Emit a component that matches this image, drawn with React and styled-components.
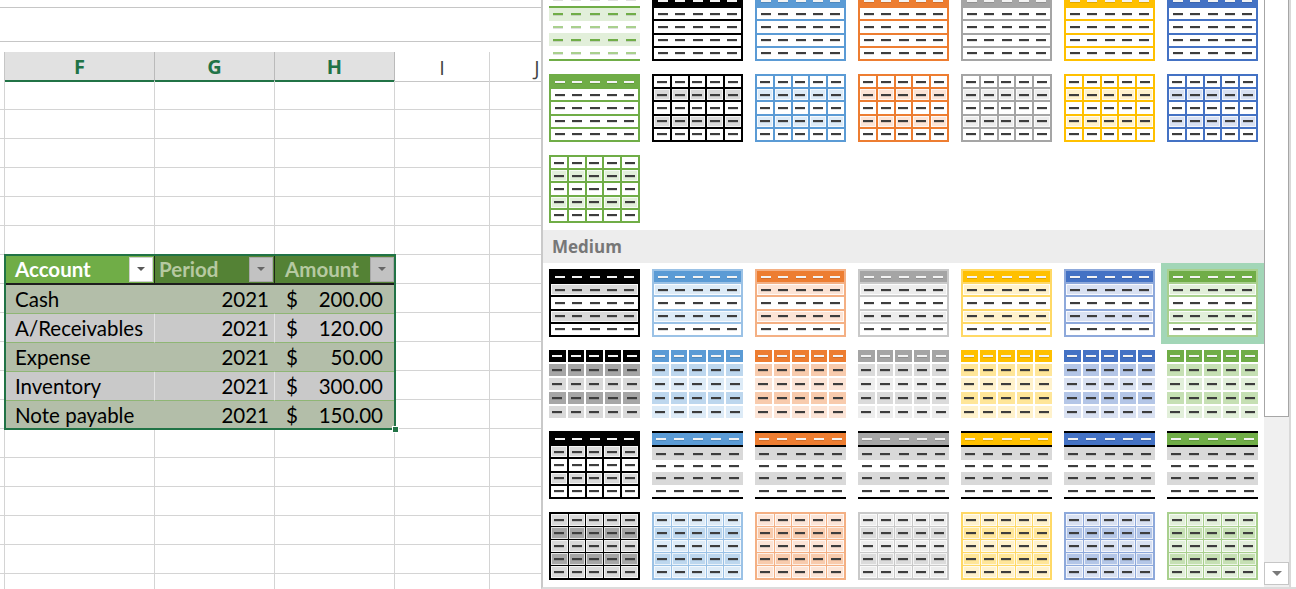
import React from "react"
import styled, { createGlobalStyle } from "styled-components"

const GlobalStyle = createGlobalStyle`
  html, body {
    margin: 0;
    padding: 0;
    background: #ffffff;
    overflow: hidden;
  }
  body {
    font-family: "Lato", "Liberation Sans", sans-serif;
  }
`

const GRID_LINE = "#d4d4d4"
const EXCEL_GREEN = "#217346"
const DARK_DASH = "#3d3d3d"
const LIGHT_DASH = "#f3f3f3"

const COLUMNS = [
  { key: "", selected: false },
  { key: "F", selected: true },
  { key: "G", selected: true },
  { key: "H", selected: true },
  { key: "I", selected: false },
  { key: "J", selected: false },
]
// J runs on under the gallery dropdown, so it keeps its full width
const COL_TEMPLATE = "5px 150px 120px 120px 95px 95px"
const BODY_ROWS = 18

const TABLE_ROWS = [
  ["Cash", "2021", "200.00"],
  ["A/Receivables", "2021", "120.00"],
  ["Expense", "2021", "50.00"],
  ["Inventory", "2021", "300.00"],
  ["Note payable", "2021", "150.00"],
]

const PAL = {
  black: { main: "#000000", line: "#000000", t20: "#D9D9D9", t40: "#A6A6A6" },
  blue: { main: "#5B9BD5", line: "#9BC2E6", t20: "#DDEBF7", t40: "#BDD7EE" },
  orange: { main: "#ED7D31", line: "#F4B084", t20: "#FCE4D6", t40: "#F8CBAD" },
  gray: { main: "#A5A5A5", line: "#C9C9C9", t20: "#EDEDED", t40: "#DBDBDB" },
  gold: { main: "#FFC000", line: "#FFD966", t20: "#FFF2CC", t40: "#FFE699" },
  navy: { main: "#4472C4", line: "#8EA9DB", t20: "#D9E1F2", t40: "#B4C6E7" },
  green: { main: "#70AD47", line: "#A9D08E", t20: "#E2EFDA", t40: "#C6E0B4" },
}
const ORDER = ["black", "blue", "orange", "gray", "gold", "navy", "green"]

const LIGHT_STYLES = [
  { kind: "banded", c: "green" },
  ...ORDER.slice(0, 6).map(c => ({ kind: "outline", c })),
  { kind: "outline", c: "green" },
  ...ORDER.slice(0, 6).map(c => ({ kind: "lgrid", c })),
  { kind: "lgrid", c: "green" },
]

const MEDIUM_STYLES = [
  ...ORDER.map(c => ({ kind: "medium", c })),
  ...ORDER.map(c => ({ kind: "mwhite", c })),
  { kind: "mdarkgrid", c: "black" },
  ...ORDER.slice(1).map(c => ({ kind: "mdark", c })),
  ...ORDER.map(c => ({ kind: "mgrid", c })),
]

// builds the look of one table-style thumbnail: frame borders + 5 rows
function thumbSpec(kind, c) {
  const p = PAL[c]
  const rows = [0, 1, 2, 3, 4].map(() => ({
    bg: "#ffffff",
    dash: DARK_DASH,
    below: null,
    sep: null,
    inset: false,
    rowInset: false,
  }))
  let frame = {}
  const each = fn => rows.forEach(fn)

  switch (kind) {
    case "banded":
      each((r, i) => {
        r.bg = i % 2 ? p.t20 : "#ffffff"
        r.dash = i % 2 ? p.main : p.line
      })
      rows[0].dash = p.main
      rows[0].below = `2px solid ${p.main}`
      frame = { bottom: `2px solid ${p.main}` }
      break
    case "outline":
      each(r => {
        r.below = `2px solid ${p.main}`
        r.rowInset = true
      })
      rows[0].bg = p.main
      rows[0].dash = LIGHT_DASH
      rows[0].rowInset = false
      frame = { all: `2px solid ${p.main}` }
      break
    case "lgrid":
      each((r, i) => {
        r.below = `2px solid ${p.main}`
        r.sep = `2px solid ${p.main}`
        r.inset = true
        if (i % 2) r.bg = p.t20
      })
      frame = { all: `2px solid ${p.main}` }
      break
    case "medium":
      each((r, i) => {
        r.below = `2px solid ${p.line}`
        r.rowInset = true
        if (i % 2) r.bg = p.t20
      })
      rows[0].bg = p.main
      rows[0].dash = LIGHT_DASH
      rows[0].rowInset = false
      frame = { all: `2px solid ${p.line}` }
      break
    case "mwhite":
      each((r, i) => {
        r.below = "2px solid #ffffff"
        r.sep = "2px solid #ffffff"
        r.bg = i % 2 ? p.t40 : p.t20
      })
      rows[0].bg = p.main
      rows[0].dash = LIGHT_DASH
      break
    case "mdark":
      each((r, i) => {
        r.bg = i % 2 ? "#D9D9D9" : "#ffffff"
      })
      rows[0].bg = p.main
      rows[0].dash = LIGHT_DASH
      rows[0].below = "2px solid #000000"
      frame = { top: "2px solid #000000", bottom: "2px solid #000000" }
      break
    case "mdarkgrid":
      each((r, i) => {
        r.bg = i % 2 ? "#D9D9D9" : "#ffffff"
        r.below = "2px solid #000000"
        r.sep = "2px solid #000000"
        r.inset = true
      })
      rows[0].bg = "#000000"
      rows[0].dash = LIGHT_DASH
      rows[0].sep = null
      rows[0].inset = false
      frame = { all: "2px solid #000000" }
      break
    case "mgrid":
      each((r, i) => {
        r.bg = i % 2 ? p.t40 : p.t20
        r.below = `1px solid ${p.line}`
        r.sep = `1px solid ${p.line}`
        r.inset = true
      })
      frame = { all: `2px solid ${p.line}` }
      break
    default:
      break
  }
  rows[4].below = null
  return { frame, rows }
}

const StyleThumb = ({ kind, c }) => {
  const { frame, rows } = thumbSpec(kind, c)
  return (
    <Thumb $all={frame.all} $top={frame.top} $bottom={frame.bottom}>
      {rows.map((r, i) => (
        <ThumbRow key={i} $bg={r.bg} $below={r.below} $inset={r.rowInset}>
          {[0, 1, 2, 3, 4].map(j => (
            <ThumbCell key={j} $sep={r.sep} $inset={r.inset}>
              <Dash $color={r.dash} />
            </ThumbCell>
          ))}
        </ThumbRow>
      ))}
    </Thumb>
  )
}

const App = () => {
  const bodyCells = []
  for (let r = 0; r < BODY_ROWS; r++) {
    for (let c = 0; c < COLUMNS.length; c++) {
      const inTable = r >= 6 && r <= 11 && c >= 1 && c <= 3
      if (!inTable) bodyCells.push(<Cell key={`${r}-${c}`} />)
    }
  }

  return (
    <>
      <GlobalStyle />
      <Screen>
        <Sheet>
          <TopBar>
            <FormulaStrip />
          </TopBar>

          <ColumnHeader>
            {COLUMNS.map((col, i) => (
              <ColHead key={i} $selected={col.selected}>
                {col.key}
              </ColHead>
            ))}
          </ColumnHeader>

          <SheetBody>
            <DataTable>
              <HeadCell $active $pad={10}>
                Account
                <DropButton $active />
              </HeadCell>
              <HeadCell $pad={4}>
                Period
                <DropButton />
              </HeadCell>
              <HeadCell $pad={10}>
                Amount
                <DropButton />
              </HeadCell>

              {TABLE_ROWS.map((row, i) => {
                const band = i % 2 === 0
                const last = i === TABLE_ROWS.length - 1
                return (
                  <React.Fragment key={row[0]}>
                    <BodyCell $band={band} $last={last}>
                      {row[0]}
                    </BodyCell>
                    <BodyCell $band={band} $last={last} $right>
                      {row[1]}
                    </BodyCell>
                    <MoneyCell $band={band} $last={last}>
                      <span>$</span>
                      <span>{row[2]}</span>
                    </MoneyCell>
                  </React.Fragment>
                )
              })}
              <FillHandle />
            </DataTable>
            {bodyCells}
          </SheetBody>
        </Sheet>

        <Panel>
          <Gallery>
            <StyleGrid>
              {LIGHT_STYLES.map((s, i) => (
                <StyleSlot key={i}>
                  <StyleThumb kind={s.kind} c={s.c} />
                </StyleSlot>
              ))}
            </StyleGrid>
            <SectionTitle>Medium</SectionTitle>
            <StyleGrid>
              {MEDIUM_STYLES.map((s, i) => (
                <StyleSlot key={i} $selected={i === 6}>
                  <StyleThumb kind={s.kind} c={s.c} />
                </StyleSlot>
              ))}
            </StyleGrid>
          </Gallery>

          <Scrollbar>
            <Track>
              <ScrollThumb />
              <DownButton />
            </Track>
            <Gutter />
          </Scrollbar>
        </Panel>
      </Screen>
    </>
  )
}

export default App

const Screen = styled.div`
  display: flex;
  width: 1296px;
  height: 589px;
  overflow: hidden;
  background: #ffffff;
`

const Sheet = styled.div`
  flex: none;
  width: 541px;
  display: flex;
  flex-direction: column;
  overflow: hidden;
`

const TopBar = styled.div`
  flex: none;
  height: 52px;
  padding-top: 7px;
  box-sizing: border-box;
`

const FormulaStrip = styled.div`
  height: 35px;
  box-sizing: border-box;
  border-top: 1px solid #c6c6c6;
  border-bottom: 1px solid #c6c6c6;
`

const ColumnHeader = styled.div`
  flex: none;
  display: grid;
  grid-template-columns: ${COL_TEMPLATE};
  height: 29px;
`

const ColHead = styled.div`
  box-sizing: border-box;
  display: flex;
  align-items: center;
  justify-content: center;
  font-family: "Open Sans", "Liberation Sans", sans-serif;
  font-size: 20px;
  font-weight: ${p => (p.$selected ? 700 : 400)};
  color: ${p => (p.$selected ? EXCEL_GREEN : "#444444")};
  background: ${p => (p.$selected ? "#e1e1e1" : "#ffffff")};
  border-right: 1px solid ${p => (p.$selected ? "#bababa" : GRID_LINE)};
  border-bottom: ${p =>
    p.$selected ? `2px solid ${EXCEL_GREEN}` : "1px solid #c6c6c6"};
  padding-top: 1px;

  &:first-child {
    border-bottom: none;
    border-right: 1px solid #c6c6c6;
  }
`

const SheetBody = styled.div`
  flex: none;
  display: grid;
  grid-template-columns: ${COL_TEMPLATE};
  grid-auto-rows: 29px;
`

const Cell = styled.div`
  box-sizing: border-box;
  border-right: 1px solid ${GRID_LINE};
  border-bottom: 1px solid ${GRID_LINE};
`

const DataTable = styled.div`
  grid-column: 2 / 5;
  grid-row: 7 / 13;
  position: relative;
  display: grid;
  grid-template-columns: 150px 120px 120px;
  grid-template-rows: 30px 29px 29px 29px 29px 28px;
  outline: 2px solid ${EXCEL_GREEN};
  outline-offset: -1px;
  font-size: 20.5px;
  color: #000000;
`

const HeadCell = styled.div`
  box-sizing: border-box;
  display: flex;
  align-items: center;
  justify-content: space-between;
  padding-left: ${p => p.$pad}px;
  padding-right: 1px;
  background: ${p => (p.$active ? "#70AD47" : "#548235")};
  color: ${p => (p.$active ? "#ffffff" : "#b6c9a1")};
  font-weight: 700;
  border-bottom: 2px solid #1d1d1d;
  border-right: 1px solid #1f2619;

  &:nth-child(3) {
    border-right: none;
  }
`

const DropButton = styled.span`
  width: 24px;
  height: 25px;
  box-sizing: border-box;
  display: flex;
  align-items: center;
  justify-content: center;
  background: ${p => (p.$active ? "#ffffff" : "#c2c2c2")};
  border: 1px solid ${p => (p.$active ? "#d0d0d0" : "#a8a8a8")};

  &::after {
    content: "";
    border-left: 4px solid transparent;
    border-right: 4px solid transparent;
    border-top: 4px solid ${p => (p.$active ? "#595959" : "#666666")};
  }
`

const BodyCell = styled.div`
  box-sizing: border-box;
  display: flex;
  align-items: center;
  justify-content: ${p => (p.$right ? "flex-end" : "flex-start")};
  padding: ${p => (p.$right ? "0 5px 0 0" : "0 0 0 10px")};
  background: ${p => (p.$band ? "#b3bea9" : "#c9c9c9")};
  border-bottom: ${p => (p.$last ? "none" : "1px solid #8fb675")};
  border-right: 1px solid ${p => (p.$band ? "transparent" : "#e3e3e3")};
`

const MoneyCell = styled(BodyCell)`
  justify-content: space-between;
  padding: 0 12px 0 11px;
  border-right: none;
`

const FillHandle = styled.span`
  position: absolute;
  right: -4px;
  bottom: -4px;
  width: 5px;
  height: 5px;
  background: ${EXCEL_GREEN};
  border: 1px solid #ffffff;
`

const Panel = styled.div`
  flex: 1;
  display: flex;
  height: 589px;
  box-sizing: border-box;
  border-left: 2px solid #c9c9c9;
  border-bottom: 2px solid #dcdcdc;
  background: #ffffff;
  overflow: hidden;
`

const Gallery = styled.div`
  width: 721px;
  flex: none;
  margin-top: -13px;
  display: flex;
  flex-direction: column;
`

const StyleGrid = styled.div`
  flex: none;
  display: grid;
  grid-template-columns: repeat(7, 103px);
  grid-auto-rows: 81px;
`

const StyleSlot = styled.div`
  box-sizing: border-box;
  padding: 6px;
  background: ${p => (p.$selected ? "#a2d6b7" : "transparent")};
`

const SectionTitle = styled.div`
  height: 33px;
  flex: none;
  display: flex;
  align-items: center;
  padding-left: 9px;
  background: #ededed;
  color: #777777;
  font-family: "Open Sans", "Liberation Sans", sans-serif;
  font-weight: 700;
  font-size: 17px;
`

const Thumb = styled.div`
  width: 91px;
  height: 68px;
  box-sizing: border-box;
  display: flex;
  flex-direction: column;
  background: #ffffff;
  border: ${p => p.$all || "none"};
  ${p => (p.$top ? `border-top: ${p.$top};` : "")}
  ${p => (p.$bottom ? `border-bottom: ${p.$bottom};` : "")}
`

const ThumbRow = styled.div`
  flex: 1;
  display: flex;
  background: ${p => p.$bg};
  border-bottom: ${p => p.$below || "none"};
  box-shadow: ${p =>
    p.$inset ? "inset 0 0 0 1px rgba(255, 255, 255, 0.8)" : "none"};
`

const ThumbCell = styled.div`
  flex: 1;
  display: flex;
  align-items: center;
  justify-content: center;
  border-right: ${p => p.$sep || "none"};
  box-shadow: ${p =>
    p.$inset ? "inset 0 0 0 1px rgba(255, 255, 255, 0.7)" : "none"};

  &:last-child {
    border-right: none;
  }
`

const Dash = styled.span`
  width: 10px;
  height: 2px;
  background: ${p => p.$color};
  box-shadow: 0 1px 0 rgba(0, 0, 0, 0.12);
`

const Scrollbar = styled.div`
  flex: none;
  width: 32px;
  display: flex;
`

const Track = styled.div`
  width: 25px;
  display: flex;
  flex-direction: column;
  justify-content: space-between;
  background: #f0f0f0;
  padding-bottom: 2px;
`

const ScrollThumb = styled.div`
  height: 417px;
  box-sizing: border-box;
  background: #ffffff;
  border: 1px solid #a6a6a6;
  border-top: none;
`

const DownButton = styled.div`
  height: 23px;
  box-sizing: border-box;
  display: flex;
  align-items: center;
  justify-content: center;
  background: #ffffff;
  border: 1px solid #c6c6c6;

  &::after {
    content: "";
    border-left: 5px solid transparent;
    border-right: 5px solid transparent;
    border-top: 5px solid #7a7a7a;
  }
`

const Gutter = styled.div`
  flex: 1;
  border-left: 2px solid #d9d9d9;
  background: #ffffff;
`
